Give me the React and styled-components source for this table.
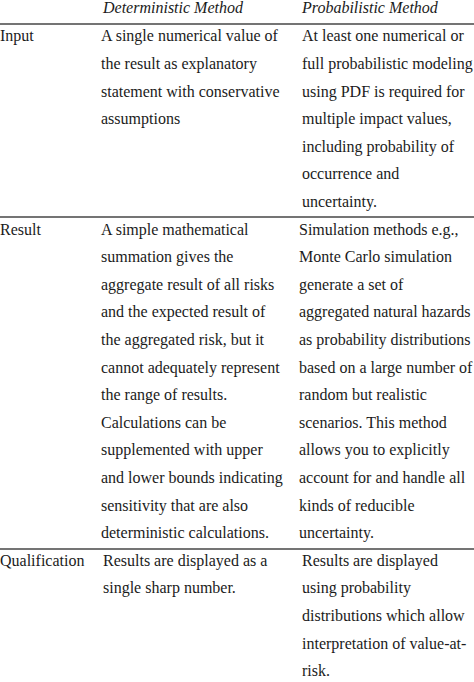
import React from 'react';
import styled, { createGlobalStyle } from 'styled-components';

const GlobalStyle = createGlobalStyle`
  html, body {
    margin: 0;
    padding: 0;
    background: #ffffff;
    overflow: hidden;
  }
`;

const Table = styled.div`
  width: 474px;
  font-family: "Liberation Serif", "Times New Roman", serif;
  font-size: 16px;
  line-height: 27.6px;
  color: #1b1b1b;
`;

const Row = styled.div`
  display: grid;
  grid-template-columns: ${p => p.cols};
  border-top: ${p => (p.head ? 'none' : '2px solid #747474')};
  padding-bottom: ${p => (p.head ? '7px' : '0.8px')};
  line-height: ${p => (p.head ? '16px' : 'inherit')};
`;

const Cell = styled.div`
  margin-top: ${p => (p.head ? '0' : '-2.7px')};
  font-style: ${p => (p.head ? 'italic' : 'normal')};
  white-space: nowrap;
`;

const Line = styled.div`
  white-space: nowrap;
`;

const rows = [
  {
    cols: '101px 201px 1fr',
    label: 'Input',
    det: [
      'A single numerical value of',
      'the result as explanatory',
      'statement with conservative',
      'assumptions',
    ],
    prob: [
      'At least one numerical or',
      'full probabilistic modeling',
      'using PDF is required for',
      'multiple impact values,',
      'including probability of',
      'occurrence and',
      'uncertainty.',
    ],
  },
  {
    cols: '101px 198px 1fr',
    label: 'Result',
    det: [
      'A simple mathematical',
      'summation gives the',
      'aggregate result of all risks',
      'and the expected result of',
      'the aggregated risk, but it',
      'cannot adequately represent',
      'the range of results.',
      'Calculations can be',
      'supplemented with upper',
      'and lower bounds indicating',
      'sensitivity that are also',
      'deterministic calculations.',
    ],
    prob: [
      'Simulation methods e.g.,',
      'Monte Carlo simulation',
      'generate a set of',
      'aggregated natural hazards',
      'as probability distributions',
      'based on a large number of',
      'random but realistic',
      'scenarios. This method',
      'allows you to explicitly',
      'account for and handle all',
      'kinds of reducible',
      'uncertainty.',
    ],
  },
  {
    cols: '103px 199px 1fr',
    label: 'Qualification',
    det: ['Results are displayed as a', 'single sharp number.'],
    prob: [
      'Results are displayed',
      'using probability',
      'distributions which allow',
      'interpretation of value-at-',
      'risk.',
    ],
  },
];

const Lines = ({ items }) => items.map(t => <Line key={t}>{t}</Line>);

export default function App() {
  return (
    <>
      <GlobalStyle />
      <Table>
        <Row head cols="103px 199px 1fr">
          <Cell head />
          <Cell head>Deterministic Method</Cell>
          <Cell head>Probabilistic Method</Cell>
        </Row>
        {rows.map(r => (
          <Row key={r.label} cols={r.cols}>
            <Cell>{r.label}</Cell>
            <Cell>
              <Lines items={r.det} />
            </Cell>
            <Cell>
              <Lines items={r.prob} />
            </Cell>
          </Row>
        ))}
      </Table>
    </>
  );
}
